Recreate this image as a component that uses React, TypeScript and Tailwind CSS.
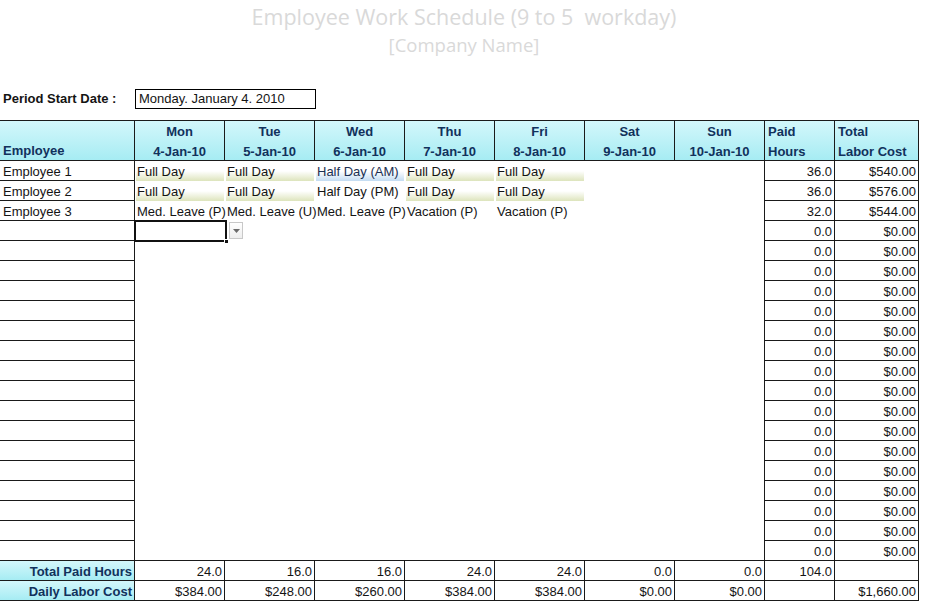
import React from 'react';

type Kind = 'full' | 'half' | 'plain';
type Entry = [string, Kind] | null;

const FULL: Entry = ['Full Day', 'full'];

const days = [
  ['Mon', '4-Jan-10'],
  ['Tue', '5-Jan-10'],
  ['Wed', '6-Jan-10'],
  ['Thu', '7-Jan-10'],
  ['Fri', '8-Jan-10'],
  ['Sat', '9-Jan-10'],
  ['Sun', '10-Jan-10'],
];

const employees: { name: string; days: Entry[]; hours: string; cost: string }[] = [
  {
    name: 'Employee 1',
    days: [FULL, FULL, ['Half Day (AM)', 'half'], FULL, FULL, null, null],
    hours: '36.0',
    cost: '$540.00',
  },
  {
    name: 'Employee 2',
    days: [FULL, FULL, ['Half Day (PM)', 'plain'], FULL, FULL, null, null],
    hours: '36.0',
    cost: '$576.00',
  },
  {
    name: 'Employee 3',
    days: [
      ['Med. Leave (P)', 'plain'],
      ['Med. Leave (U)', 'plain'],
      ['Med. Leave (P)', 'plain'],
      ['Vacation (P)', 'plain'],
      ['Vacation (P)', 'plain'],
      null,
      null,
    ],
    hours: '32.0',
    cost: '$544.00',
  },
];

const rows = [
  ...employees,
  ...Array.from({ length: 17 }).map(() => ({
    name: '',
    days: [null, null, null, null, null, null, null] as Entry[],
    hours: '0.0',
    cost: '$0.00',
  })),
];

const totalHours = ['24.0', '16.0', '16.0', '24.0', '24.0', '0.0', '0.0'];
const dailyCost = ['$384.00', '$248.00', '$260.00', '$384.00', '$384.00', '$0.00', '$0.00'];

const head = 'bg-linear-to-b from-[#d3f7fb] to-[#a6ecf3] font-bold text-[#11315c] border-b border-r border-[#1a1a1a]';

function dayCell(e: Entry, last: boolean, sun: boolean) {
  const edge = `${last ? 'border-b' : ''} ${sun ? 'border-r' : ''} border-[#1a1a1a]`;
  if (!e) return <div className={`h-[20px] ${edge}`} />;
  const [text, kind] = e;
  const bg =
    kind === 'full'
      ? 'bg-linear-to-b from-white from-50% to-[#dde4bc]'
      : kind === 'half'
        ? 'bg-linear-to-b from-white from-50% to-[#c3dcf2]'
        : '';
  const color = kind === 'half' ? 'text-[#1b2f52]' : 'text-[#141414]';
  return (
    <div className={`relative h-[20px] ${edge}`}>
      <div className={`absolute inset-y-0 left-[1px] right-[1px] ${bg}`} />
      <span className={`relative block whitespace-nowrap pl-[2px] leading-[21px] ${color}`}>{text}</span>
    </div>
  );
}

export default function App() {
  return (
    <div
      className="relative h-[608px] w-[928px] overflow-hidden bg-white text-[13px] text-[#141414]"
      style={{ fontFamily: '"Liberation Sans", Arial, sans-serif' }}
    >
      <div className="mt-[5px] h-[24px] text-center text-[21.5px] leading-[24px] text-[#d9d9d9]" style={{ fontFamily: '"Open Sans", sans-serif' }}>
        Employee Work Schedule (9 to 5&nbsp; workday)
      </div>
      <div className="mt-[6px] h-[20px] text-center text-[18.5px] leading-[20px] text-[#d9d9d9]" style={{ fontFamily: '"Open Sans", sans-serif' }}>
        [Company Name]
      </div>

      <div className="mt-[34px] flex h-[20px] items-center">
        <div className="w-[135px] pl-[3px] font-bold">Period Start Date :</div>
        <div className="h-[20px] w-[181px] border border-black pl-[3px] leading-[18px]">Monday. January 4. 2010</div>
      </div>

      <div className="relative mt-[11px] w-[919px] border-t border-[#1a1a1a]">
        <div className="grid grid-cols-[135px_repeat(7,90px)_70px_84px]">
          {/* header */}
          <div className={`${head} flex h-[40px] items-end pl-[3px] leading-[19px]`}>Employee</div>
          {days.map(([d, date]) => (
            <div key={d} className={`${head} h-[40px] pt-[1px] text-center leading-[20px]`}>
              <div>{d}</div>
              <div>{date}</div>
            </div>
          ))}
          <div className={`${head} h-[40px] pl-[3px] pt-[1px] leading-[20px]`}>
            <div>Paid</div>
            <div>Hours</div>
          </div>
          <div className={`${head} h-[40px] pl-[3px] pt-[1px] leading-[20px]`}>
            <div>Total</div>
            <div>Labor Cost</div>
          </div>

          {/* body */}
          {rows.map((r, i) => {
            const last = i === rows.length - 1;
            return (
              <React.Fragment key={i}>
                <div className="h-[20px] border-b border-r border-[#1a1a1a] pl-[3px] leading-[21px]">{r.name}</div>
                {r.days.map((e, j) => (
                  <React.Fragment key={j}>{dayCell(e, last, j === 6)}</React.Fragment>
                ))}
                <div className="h-[20px] border-b border-r border-[#1a1a1a] pr-[2px] text-right leading-[21px]">{r.hours}</div>
                <div className="h-[20px] border-b border-r border-[#1a1a1a] pr-[2px] text-right leading-[21px]">{r.cost}</div>
              </React.Fragment>
            );
          })}

          {/* totals */}
          <div className="h-[20px] border-b border-r border-[#1a1a1a] bg-linear-to-b from-[#d3f7fb] to-[#a6ecf3] pr-[2px] text-right font-bold leading-[21px] text-[#11315c]">
            Total Paid Hours
          </div>
          {totalHours.map((v, j) => (
            <div key={j} className="h-[20px] border-b border-r border-[#1a1a1a] pr-[2px] text-right leading-[21px]">{v}</div>
          ))}
          <div className="h-[20px] border-b border-r border-[#1a1a1a] pr-[2px] text-right leading-[21px]">104.0</div>
          <div className="h-[20px] border-b border-r border-[#1a1a1a]" />

          <div className="h-[20px] border-b border-r border-[#1a1a1a] bg-linear-to-b from-[#d3f7fb] to-[#a6ecf3] pr-[2px] text-right font-bold leading-[21px] text-[#11315c]">
            Daily Labor Cost
          </div>
          {dailyCost.map((v, j) => (
            <div key={j} className="h-[20px] border-b border-r border-[#1a1a1a] pr-[2px] text-right leading-[21px]">{v}</div>
          ))}
          <div className="h-[20px] border-b border-r border-[#1a1a1a]" />
          <div className="h-[20px] border-b border-r border-[#1a1a1a] pr-[2px] text-right leading-[21px]">$1,660.00</div>
        </div>

        {/* active cell with list arrow */}
        <div className="absolute left-[134px] top-[99px] h-[22px] w-[93px] border-2 border-[#111]">
          <div className="absolute -bottom-[4px] -right-[4px] h-[5px] w-[5px] border border-white bg-[#111]" />
        </div>
        <div className="absolute left-[229px] top-[101px] flex h-[17px] w-[14px] items-center justify-center border border-[#c8c8c8] bg-linear-to-b from-white to-[#eeeeee]">
          <svg width="7" height="4" viewBox="0 0 7 4">
            <path d="M0 0h7L3.5 4z" fill="#6b6b6b" />
          </svg>
        </div>
      </div>
    </div>
  );
}
